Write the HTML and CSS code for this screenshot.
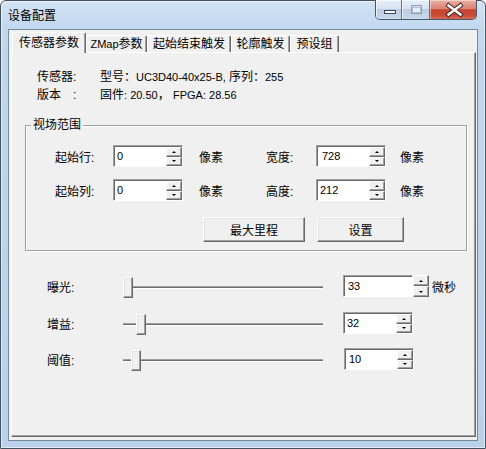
FILE: index.html
```html
<!DOCTYPE html>
<html lang="zh-CN">
<head>
<meta charset="utf-8">
<title>设备配置</title>
<link rel="stylesheet" href="styles.css">
</head>
<body>
<div class="window">
  <div class="titlebar">
    <span class="title">设备配置</span>
    <div class="caption-btns">
      <span class="cbtn min"><svg width="26" height="19" viewBox="0 0 26 19"><rect x="8.5" y="10.5" width="11" height="3" fill="#fff" stroke="#36475b"/></svg></span>
      <span class="cbtn max"><svg width="28" height="19" viewBox="0 0 28 19"><rect x="9.5" y="5.5" width="10" height="8" fill="#d5dfea" stroke="#8d9fb4"/><rect x="10.5" y="7.5" width="8" height="5" fill="#e7eef6" stroke="#b3c2d3"/></svg></span>
      <span class="cbtn close"><svg width="46" height="19" viewBox="0 0 46 19"><path d="M18.5 5.5 L30.5 14.5 M30.5 5.5 L18.5 14.5" stroke="#4a2a24" stroke-width="4.5" stroke-linecap="square" fill="none"/><path d="M18.5 5.5 L30.5 14.5 M30.5 5.5 L18.5 14.5" stroke="#fff" stroke-width="2.5" stroke-linecap="square" fill="none"/></svg></span>
    </div>
  </div>
  <div class="client">
    <div class="tabstrip">
      <div class="tab active t1">传感器参数</div>
      <div class="tab t2"><span class="lt">ZMap</span>参数</div>
      <div class="tab t3">起始结束触发</div>
      <div class="tab t4">轮廓触发</div>
      <div class="tab t5">预设组</div>
    </div>
    <div class="panel">
      <div class="info">
        <span>传感器</span><span>:</span><span>型号：<span class="lt">UC3D40-40x25-B, </span>序列：<span class="lt">255</span></span>
        <span>版本</span><span>:</span><span>固件<span class="lt">: 20.50</span>， <span class="lt">FPGA: 28.56</span></span>
      </div>
      <fieldset class="group">
        <legend>视场范围</legend>
        <div class="fgrid">
          <span>起始行:</span>
          <div class="spin"><span class="val">0</span><span class="ud"><i class="up"></i><i class="dn"></i></span></div>
          <span class="unit">像素</span>
          <span>宽度:</span>
          <div class="spin"><span class="val v6">728</span><span class="ud"><i class="up"></i><i class="dn"></i></span></div>
          <span class="unit r">像素</span>

          <span>起始列:</span>
          <div class="spin"><span class="val">0</span><span class="ud"><i class="up"></i><i class="dn"></i></span></div>
          <span class="unit">像素</span>
          <span>高度:</span>
          <div class="spin"><span class="val">212</span><span class="ud"><i class="up"></i><i class="dn"></i></span></div>
          <span class="unit r">像素</span>
        </div>
        <div class="btnrow">
          <button class="btn b1">最大里程</button>
          <button class="btn b2">设置</button>
        </div>
      </fieldset>
      <div class="sliders">
        <div class="srow">
          <span class="slbl">曝光:</span>
          <div class="slider"><div class="trk"></div><span class="thumb" style="left:0px"></span></div>
          <div class="edit"><span class="val v5">33</span></div>
          <span class="updown"><i class="up"></i><i class="dn"></i></span>
          <span class="unit2">微秒</span>
        </div>
        <div class="srow g2">
          <span class="slbl">增益:</span>
          <div class="slider"><div class="trk"></div><span class="thumb" style="left:13px"></span></div>
          <div class="spin sp"><span class="val">32</span><span class="ud"><i class="up"></i><i class="dn"></i></span></div>
        </div>
        <div class="srow">
          <span class="slbl">阈值:</span>
          <div class="slider"><div class="trk"></div><span class="thumb" style="left:8px"></span></div>
          <div class="spin sp s3"><span class="val v5">10</span><span class="ud"><i class="up"></i><i class="dn"></i></span></div>
        </div>
      </div>
    </div>
  </div>
</div>
</body>
</html>
```
FILE: styles.css
```css
* { box-sizing: border-box; margin: 0; padding: 0; }
html, body { width: 486px; height: 449px; overflow: hidden; background: #fff; }
body {
  font-family: "Liberation Sans", "Noto Sans CJK SC", sans-serif;
  font-size: 12px;
  color: #000;
}
.lt { font-size: 11px; }

.window {
  width: 486px;
  height: 449px;
  border: 1px solid #44525f;
  border-radius: 6px 6px 0 0;
  background: linear-gradient(#d2e3f5, #c0d7ef 30px, #b9d1ea);
  box-shadow: inset 1px 1px 0 rgba(255,255,255,.55), inset -1px -1px 0 rgba(255,255,255,.55);
  padding: 0 7px 7px;
  display: flex;
  flex-direction: column;
}

.titlebar {
  height: 28px;
  display: flex;
  justify-content: space-between;
  align-items: flex-start;
}
.title {
  margin-top: 7px;
  line-height: 14px;
  font-family: "Noto Sans CJK SC", sans-serif;
}
.caption-btns {
  display: flex;
  height: 20px;
  margin-top: -1px;
  margin-right: 1px;
  border: 1px solid #46576b;
  border-top: 0;
  border-radius: 0 0 5px 5px;
  overflow: hidden;
}
.cbtn { display: block; height: 19px; }
.cbtn svg { display: block; }
.min, .max {
  background: linear-gradient(#e6eef7 0%, #d6e2ef 45%, #bccde1 50%, #c9d8ea 100%);
  box-shadow: inset 1px 1px 0 rgba(255,255,255,.7);
  border-right: 1px solid #5d6f85;
}
.min { width: 26px; }
.max { width: 28px; }
.close {
  width: 46px;
  background: linear-gradient(#eab0a3 0%, #da8473 45%, #c8442f 52%, #c94a36 80%, #d96a55 100%);
  box-shadow: inset 1px 1px 0 rgba(255,255,255,.45);
}

.client {
  flex: 1;
  background: #f0f0f0;
  border: 1px solid #7b8a9a;
  display: flex;
  flex-direction: column;
  padding: 2px 1px 3px 2px;
}

.tabstrip {
  height: 20px;
  display: flex;
  align-items: flex-start;
  padding-left: 1px;
}
.tab {
  height: 17px;
  margin-top: 3px;
  line-height: 16px;
  text-align: center;
  white-space: nowrap;
  background: #f0f0f0;
  border: 1px solid #fff;
  border-bottom: 0;
  border-right-color: #696969;
  box-shadow: inset -1px 0 0 #a0a0a0;
  border-radius: 2px 2px 0 0;
}
.tab.active {
  height: 21px;
  margin-top: 0;
  line-height: 20px;
  position: relative;
  z-index: 1;
}
.t1 { width: 74px; }
.t2 { width: 61px; }
.t3 { width: 84px; }
.t4 { width: 59px; }
.t5 { width: 49px; }

.panel {
  flex: 1;
  border: 1px solid;
  border-color: #fff #696969 #696969 #fff;
  box-shadow: inset -1px -1px 0 #a0a0a0;
  padding-top: 15px;
}

.info {
  display: grid;
  grid-template-columns: 36px 27px auto;
  line-height: 18px;
  margin-left: 25px;
}

.group {
  margin: 14px 8px 0 13px;
  border: 1px solid #a0a0a0;
  box-shadow: inset 1px 1px 0 #fff, 1px 1px 0 #fff;
  padding: 13px 0 8px 0;
  min-width: 0;
}
.group legend {
  margin-left: 5px;
  padding: 0 2px;
  line-height: 14px;
}

.fgrid {
  display: grid;
  grid-template-columns: 58px 70px 83px 50px 70px auto;
  grid-auto-rows: 22px;
  row-gap: 12px;
  align-items: center;
  margin-left: 29px;
}
.unit { padding-left: 16px; }
.unit.r { padding-left: 14px; }

.spin, .edit {
  display: flex;
  width: 70px;
  height: 22px;
  background: #fff;
  border: 1px solid;
  border-color: #a0a0a0 #fff #fff #a0a0a0;
  box-shadow: inset 1px 1px 0 #696969;
}
.val { flex: 1; padding-left: 3px; line-height: 20px; font-size: 11px; }
.val.v5 { padding-left: 4px; }
.val.v6 { padding-left: 5px; }
.ud {
  width: 16px;
  display: flex;
  flex-direction: column;
  margin-top: 1px;
}
.ud i, .updown i {
  flex: 1;
  display: flex;
  align-items: center;
  justify-content: center;
  background: #f0f0f0;
  border: 1px solid;
  border-color: #fff #696969 #696969 #fff;
  box-shadow: inset -1px -1px 0 #a0a0a0;
}
.up::after {
  content: "";
  border-left: 2px solid transparent;
  border-right: 2px solid transparent;
  border-bottom: 2px solid #000;
}
.dn::after {
  content: "";
  border-left: 2px solid transparent;
  border-right: 2px solid transparent;
  border-top: 2px solid #000;
}
.updown {
  width: 16px;
  height: 22px;
  display: flex;
  flex-direction: column;
}

.btnrow {
  display: flex;
  gap: 12px;
  margin: 16px 0 0 177px;
}
.btn {
  height: 25px;
  font: inherit;
  color: #000;
  background: #f0f0f0;
  border: 1px solid;
  border-color: #fff #696969 #696969 #fff;
  box-shadow: inset -1px -1px 0 #a0a0a0, inset 1px 1px 0 #e3e3e3;
}
.b1 { width: 102px; }
.b2 { width: 87px; }

.sliders {
  display: flex;
  flex-direction: column;
  gap: 14px;
  margin: 24px 0 0 35px;
}
.srow {
  display: flex;
  align-items: center;
  height: 22px;
}
.srow.g2 { margin-top: 1px; }
.slbl { width: 76px; }
.slider {
  width: 200px;
  height: 22px;
  position: relative;
}
.trk {
  margin-top: 11px;
  height: 3px;
  background: linear-gradient(#a0a0a0 0 1px, #6f6f6f 1px 2px, #fff 2px 3px);
}
.thumb {
  position: absolute;
  top: 2px;
  width: 10px;
  height: 21px;
  background: #f0f0f0;
  border: 1px solid;
  border-color: #fff #696969 #696969 #fff;
  box-shadow: inset -1px -1px 0 #a0a0a0, inset 1px 1px 0 #e3e3e3;
}
.edit, .sp { margin-left: 20px; }
.sp.s3 { margin-left: 21px; }
.unit2 { margin-left: 3px; }
```
